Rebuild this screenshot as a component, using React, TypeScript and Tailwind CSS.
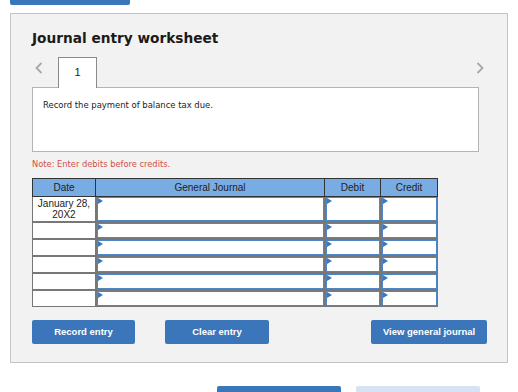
import React from 'react';

const rows = ['January 28,\n20X2', '', '', '', '', ''];

const InputCell = () => (
  <div className="relative bg-white border border-[#4f86c6]">
    <span className="absolute top-0 left-0 w-0 h-0 border-y-[3px] border-y-transparent border-l-[5px] border-l-[#3a78c2]" />
  </div>
);

const verdana = { fontFamily: '"DejaVu Sans Condensed", "DejaVu Sans", Verdana, sans-serif' };

export default function App() {
  return (
    <div className="w-[518px] h-[392px] bg-white overflow-hidden" style={{ fontFamily: '"Liberation Sans", Arial, sans-serif' }}>
      {/* top button stub */}
      <div className="ml-[10px] w-[120px] h-[5px] bg-[#3b76bb] rounded-b-[2px]" />

      {/* worksheet panel */}
      <div className="mt-[8px] ml-[10px] w-[498px] h-[350px] bg-[#f2f2f2] border border-[#c4c4c4] pl-[21px] pr-[20px] pt-[15px]">
        <h2 className="text-[13.7px] leading-[18px] font-bold text-[#1a1a1a]" style={{ fontFamily: '"DejaVu Sans", Verdana, sans-serif' }}>
          Journal entry worksheet
        </h2>

        {/* tabs */}
        <div className="mt-[9px] flex items-end w-[460px] h-[31px] relative">
          <svg className="absolute left-[3px] top-[6px]" width="8" height="12" viewBox="0 0 8 12">
            <path d="M6.5 1 L1.5 6 L6.5 11" fill="none" stroke="#a8a8a8" strokeWidth="1.8" />
          </svg>
          <div className="ml-[26px] w-[39px] h-[31px] bg-white border border-b-0 border-[#8a8a8a] flex justify-center pt-[6px] text-[11px] text-[#222] relative z-10 -mb-[1px]">
            1
          </div>
          <svg className="absolute left-[444px] top-[6px]" width="8" height="12" viewBox="0 0 8 12">
            <path d="M1.5 1 L6.5 6 L1.5 11" fill="none" stroke="#a8a8a8" strokeWidth="1.8" />
          </svg>
        </div>
        <div className="w-[447px] h-[65px] bg-white border border-[#b4b4b4] px-[10px] pt-[10px] text-[9.4px] text-[#222]" style={verdana}>
          Record the payment of balance tax due.
        </div>

        <p className="mt-[7px] text-[8.3px] leading-[10px] text-[#d0504a]" style={{ fontFamily: '"DejaVu Sans", Verdana, sans-serif' }}>
          Note: Enter debits before credits.
        </p>

        {/* journal table */}
        <div className="mt-[9px] w-[406px] text-[10px] text-[#222]">
          <div className="flex h-[19px] bg-[#78ace3] border border-[#333]">
            <div className="w-[63px] border-r border-[#333] flex items-center justify-center">Date</div>
            <div className="w-[229px] border-r border-[#333] flex items-center justify-center">General Journal</div>
            <div className="w-[56px] border-r border-[#333] flex items-center justify-center">Debit</div>
            <div className="flex-1 flex items-center justify-center">Credit</div>
          </div>
          <div className="grid grid-cols-[62px_227px_54px_55px] grid-rows-[24px_15px_15px_15px_15px_15px] gap-[2px] bg-[#777777] p-[1px] pt-0">
            {rows.map((d, i) => (
              <React.Fragment key={i}>
                <div className="bg-white text-center leading-[11px] pt-[1px] whitespace-pre-line">{d}</div>
                <InputCell />
                <InputCell />
                <InputCell />
              </React.Fragment>
            ))}
          </div>
        </div>

        {/* actions */}
        <div className="mt-[13px] flex items-center text-white font-bold text-[9.5px]">
          <button className="w-[103px] h-[24px] bg-[#3b76bb] rounded-[2px]">Record entry</button>
          <button className="ml-[30px] w-[104px] h-[24px] bg-[#3b76bb] rounded-[2px]">Clear entry</button>
          <button className="ml-auto w-[116px] h-[24px] bg-[#3b76bb] rounded-[2px]">View general journal</button>
        </div>
      </div>

      {/* bottom nav stubs */}
      <div className="mt-[23px] ml-[217px] flex gap-[15px]">
        <div className="w-[124px] h-[10px] bg-[#3b76bb] rounded-t-[2px]" />
        <div className="w-[124px] h-[10px] bg-[#d6e3f3] rounded-t-[2px]" />
      </div>
    </div>
  );
}
